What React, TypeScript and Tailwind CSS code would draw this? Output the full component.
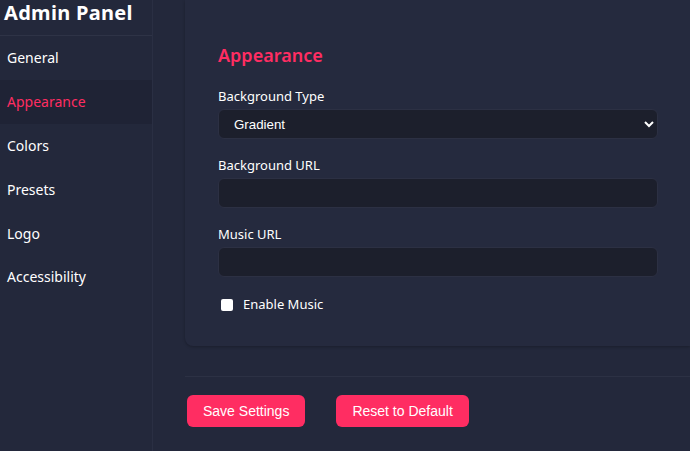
import { useState } from "react";

const NAV = ["General", "Appearance", "Colors", "Presets", "Logo", "Accessibility"];

export default function App() {
  const [active, setActive] = useState("Appearance");
  const [bgType, setBgType] = useState("gradient");
  const [music, setMusic] = useState(false);

  return (
    <div className="flex h-[451px] w-[690px] overflow-hidden bg-[#23283b] text-white font-['Noto_Sans',sans-serif]">
      {/* Sidebar */}
      <aside className="w-[153px] shrink-0 border-r border-[#2a2f43] bg-[#23283b]">
        <div className="h-[36px] border-b border-[#2e3346] px-[4px] pt-[1px]">
          <h1 className="text-[20px] font-bold leading-[24px] tracking-[0.3px]">Admin Panel</h1>
        </div>
        <nav>
          {NAV.map((item) => (
            <button
              key={item}
              type="button"
              onClick={() => setActive(item)}
              className={`flex h-[43.8px] w-full items-center px-[7px] text-left text-[14px] ${
                active === item ? "bg-[#1f2335] text-[#ff2d62]" : "text-white"
              }`}
            >
              {item}
            </button>
          ))}
        </nav>
      </aside>

      {/* Main */}
      <main className="flex-1 pl-8">
        <section className="rounded-bl-lg bg-[#252a3e] pl-[33px] pr-[32px] pt-[41px] pb-[31px] shadow-[0_1px_3px_rgba(0,0,0,0.25)]">
          <h2 className="text-[18px] font-semibold leading-[28px] text-[#ff2d62]">Appearance</h2>

          <div className="mt-[17px]">
            <label className="mb-[3px] block text-[13px] leading-[20px]">Background Type</label>
            <select
              value={bgType}
              onChange={(e) => setBgType(e.target.value)}
              className="h-[30px] w-full rounded-md border border-[#2c3043] bg-[#1c1f2c] px-[11px] text-[13.3px] text-white outline-none font-['Liberation_Sans',Arial,sans-serif]"
            >
              <option value="gradient">Gradient</option>
              <option value="image">Image</option>
              <option value="color">Solid Color</option>
            </select>
          </div>

          <div className="mt-[16px]">
            <label className="mb-[3px] block text-[13px] leading-[20px]">Background URL</label>
            <input
              type="text"
              className="h-[30px] w-full rounded-md border border-[#2c3043] bg-[#1c1f2c] px-3 text-[13px] text-white outline-none"
            />
          </div>

          <div className="mt-[16px]">
            <label className="mb-[3px] block text-[13px] leading-[20px]">Music URL</label>
            <input
              type="text"
              className="h-[30px] w-full rounded-md border border-[#2c3043] bg-[#1c1f2c] px-3 text-[13px] text-white outline-none"
            />
          </div>

          <label className="mt-[18px] flex h-[20px] items-center text-[13px]">
            <input
              type="checkbox"
              checked={music}
              onChange={(e) => setMusic(e.target.checked)}
              className="ml-[3px] mr-[10px] h-[12px] w-[12px] appearance-none rounded-[2px] bg-white checked:bg-[#ff2d62]"
            />
            Enable Music
          </label>
        </section>

        <div className="mt-[30px] border-t border-[#2c3144] pt-[18px]">
          <div className="flex gap-[31px] pl-[2px] font-['Liberation_Sans',Arial,sans-serif]">
            <button type="button" className="h-[32px] rounded-md bg-[#ff2d62] px-[16px] text-[14px] text-white">
              Save Settings
            </button>
            <button type="button" className="h-[32px] rounded-md bg-[#ff2d62] px-[16px] text-[14px] text-white">
              Reset to Default
            </button>
          </div>
        </div>
      </main>
    </div>
  );
}
